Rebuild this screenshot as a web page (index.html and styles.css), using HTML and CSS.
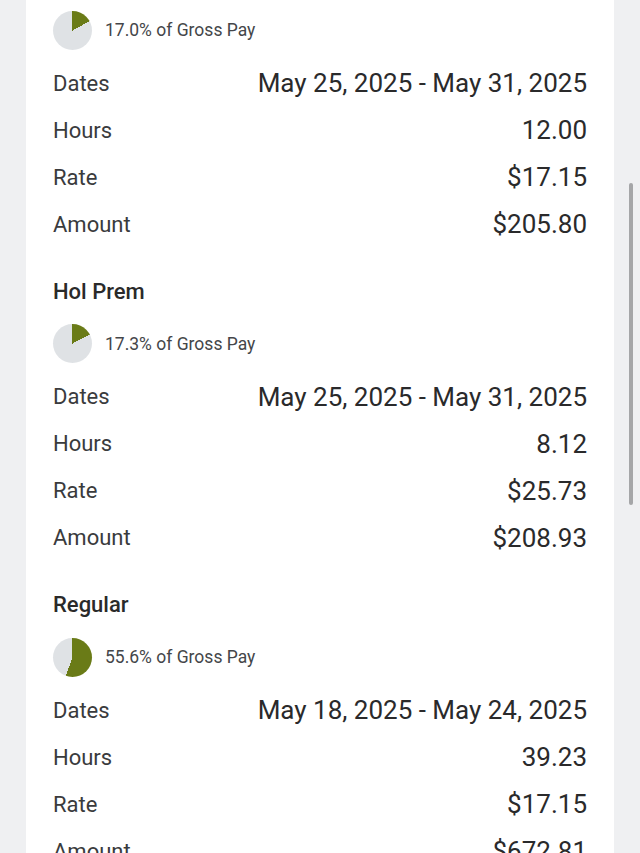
FILE: index.html
```html
<!DOCTYPE html>
<html>
<head>
<meta charset="utf-8">
<link rel="stylesheet" href="styles.css">
</head>
<body>
<div class="card">
  <section class="section first">
    <div class="share"><span class="pie" style="--p:17%"></span><span class="share-text">17.0% of Gross Pay</span></div>
    <div class="row"><span class="label">Dates</span><span class="value">May 25, 2025 - May 31, 2025</span></div>
    <div class="row"><span class="label">Hours</span><span class="value">12.00</span></div>
    <div class="row"><span class="label">Rate</span><span class="value">$17.15</span></div>
    <div class="row"><span class="label">Amount</span><span class="value">$205.80</span></div>
  </section>
  <section class="section">
    <h3 class="title">Hol Prem</h3>
    <div class="share"><span class="pie" style="--p:17.3%"></span><span class="share-text">17.3% of Gross Pay</span></div>
    <div class="row"><span class="label">Dates</span><span class="value">May 25, 2025 - May 31, 2025</span></div>
    <div class="row"><span class="label">Hours</span><span class="value">8.12</span></div>
    <div class="row"><span class="label">Rate</span><span class="value">$25.73</span></div>
    <div class="row"><span class="label">Amount</span><span class="value">$208.93</span></div>
  </section>
  <section class="section">
    <h3 class="title">Regular</h3>
    <div class="share"><span class="pie" style="--p:55.6%"></span><span class="share-text">55.6% of Gross Pay</span></div>
    <div class="row"><span class="label">Dates</span><span class="value">May 18, 2025 - May 24, 2025</span></div>
    <div class="row"><span class="label">Hours</span><span class="value">39.23</span></div>
    <div class="row"><span class="label">Rate</span><span class="value">$17.15</span></div>
    <div class="row"><span class="label">Amount</span><span class="value">$672.81</span></div>
  </section>
</div>
<div class="scrollbar"></div>
</body>
</html>
```
FILE: styles.css
```css
html, body {
  margin: 0;
  padding: 0;
  height: 853px;
  overflow: hidden;
  background: #eff0f2;
  font-family: Roboto, "Noto Sans", Arial, sans-serif;
}
.card {
  margin-left: 26px;
  width: 588px;
  background: #ffffff;
  box-sizing: border-box;
  padding: 10px 27px 0 27px;
  min-height: 853px;
}
.section {
  display: flex;
  flex-direction: column;
  margin-top: 24px;
}
.section.first {
  margin-top: 0;
}
.title {
  margin: 0 0 12px 0;
  height: 40px;
  line-height: 40px;
  font-size: 22px;
  font-weight: 500;
  color: #2a2a2a;
}
.share {
  display: flex;
  align-items: center;
  height: 40px;
  margin-bottom: 9.5px;
}
.pie {
  width: 39px;
  height: 39px;
  border-radius: 50%;
  background: conic-gradient(#6a7b17 0 var(--p), #dfe2e5 var(--p) 100%);
  flex: none;
}
.share-text {
  margin-left: 13px;
  font-size: 17.5px;
  color: #444649;
}
.row {
  display: flex;
  justify-content: space-between;
  align-items: center;
  height: 47px;
}
.label {
  font-size: 22px;
  color: #3a3b3d;
}
.value {
  font-size: 26px;
  color: #2a2a2b;
}
.scrollbar {
  position: absolute;
  left: 629px;
  top: 183px;
  width: 4px;
  height: 322px;
  border-radius: 2px;
  background: #a5a6a8;
}
```
